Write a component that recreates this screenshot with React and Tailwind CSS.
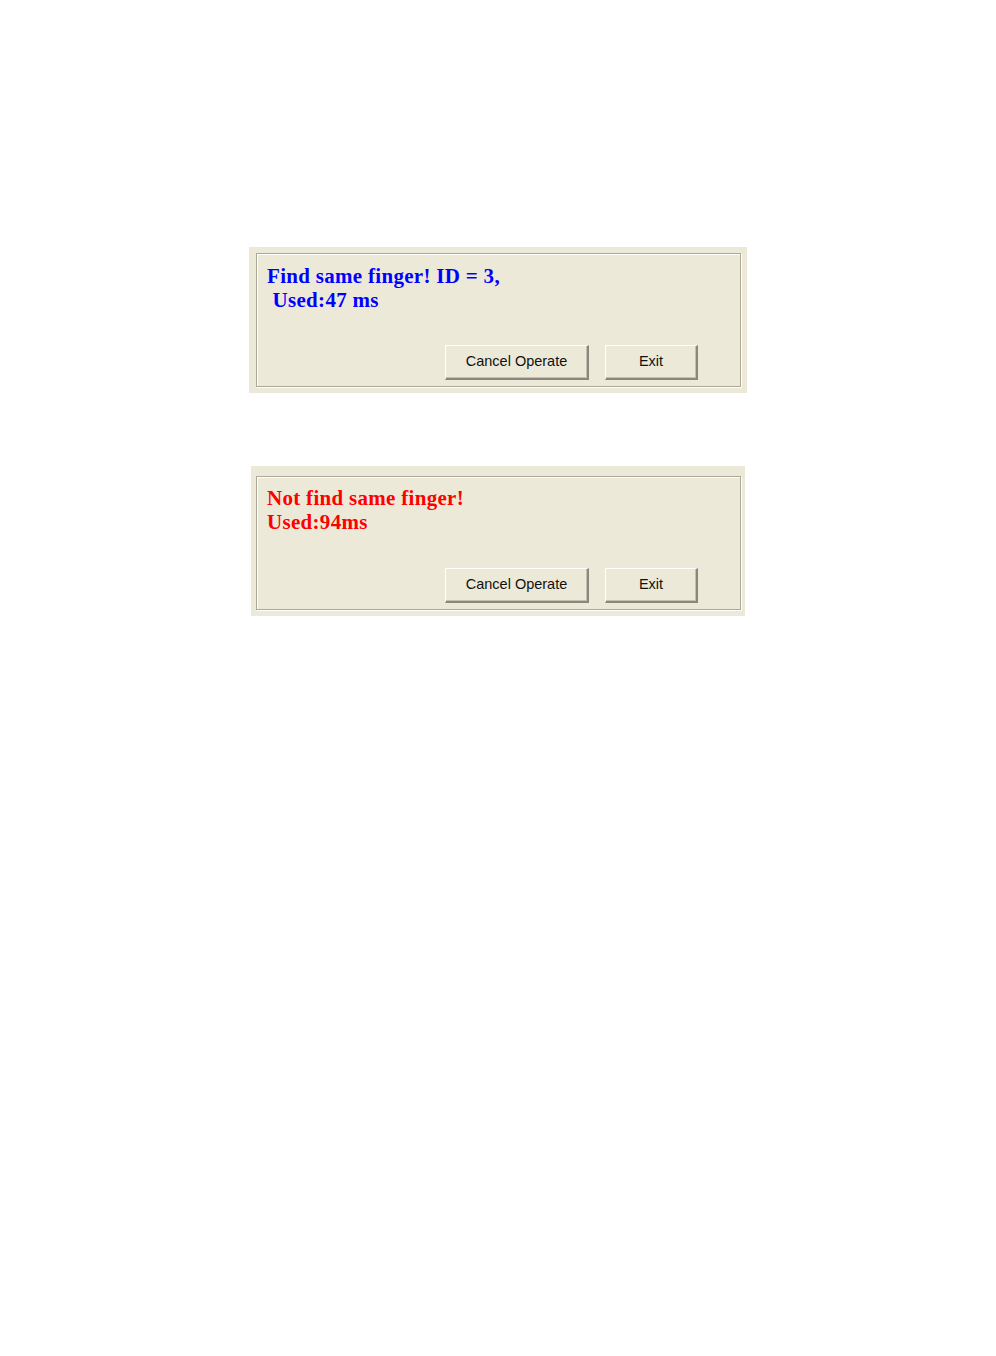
import React from "react";

function XpButton({ children, width }) {
  return (
    <button
      className={`h-[35px] ${width} flex items-center justify-center bg-[#ece9d8] border-t border-l border-t-white border-l-white border-r-2 border-b-2 border-r-[#8a887d] border-b-[#8a887d] shadow-[inset_-1px_-1px_0_#c4c1b3] text-[14.5px] text-[#111] font-['Liberation_Sans',Arial,sans-serif]`}
    >
      {children}
    </button>
  );
}

function ResultPanel({ lines, color, outer, inner, textPad }) {
  return (
    <div className={`bg-[#ece9d8] ${outer}`}>
      <div
        className={`flex flex-col h-full border border-[#aca899] shadow-[inset_1px_1px_0_#fff,1px_1px_0_#fff] ${inner}`}
      >
        <div
          className={`pl-[10px] ${textPad} font-['Liberation_Serif','Times_New_Roman',serif] font-bold text-[21px] tracking-[0.3px] leading-[24px] whitespace-pre ${color}`}
        >
          {lines.map((l, i) => (
            <div key={i}>{l}</div>
          ))}
        </div>
        <div className="flex-1" />
        <div className="flex gap-[16px] pl-[188px]">
          <XpButton width="w-[144px]">Cancel Operate</XpButton>
          <XpButton width="w-[93px]">Exit</XpButton>
        </div>
      </div>
    </div>
  );
}

export default function App() {
  return (
    <div className="min-h-[1356px] w-[996px] bg-white pt-[247px]">
      <ResultPanel
        lines={["Find same finger! ID = 3,", " Used:47 ms"]}
        color="text-[#0000ff]"
        outer="ml-[249px] w-[498px] h-[146px] pl-[7px] pt-[6px] pr-[6px] pb-[6px]"
        inner="pb-[6px]"
        textPad="pt-[10px]"
      />
      <ResultPanel
        lines={["Not find same finger!", "Used:94ms"]}
        color="text-[#ff0000]"
        outer="mt-[73px] ml-[251px] w-[494px] h-[150px] pl-[5px] pt-[10px] pr-[4px] pb-[6px]"
        inner="pb-[6px]"
        textPad="pt-[9px]"
      />
    </div>
  );
}
